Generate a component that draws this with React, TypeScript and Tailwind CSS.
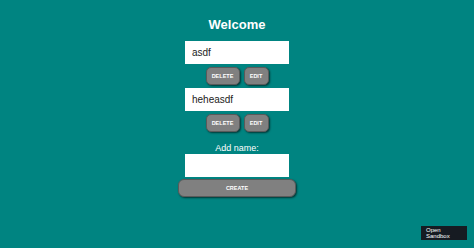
const names = ['asdf', 'heheasdf'];

function SmallButton({ label, width }: { label: string; width: string }) {
  return (
    <button
      className={`${width} flex h-[18px] items-center justify-center rounded-[5px] border border-[#5a5a5a] bg-[#808080] text-[5.5px] font-bold text-white shadow-[1px_1px_2px_rgba(0,0,0,0.6)]`}
    >
      {label}
    </button>
  );
}

export default function App() {
  return (
    <div className="relative h-[248px] w-[474px] overflow-hidden bg-[#008481] font-['Liberation_Sans',Arial,sans-serif]">
      <div className="flex flex-col items-center pt-[16px]">
        <h1 className="text-[13px] leading-[18px] font-bold text-white">Welcome</h1>

        <div className="mt-[7px] flex flex-col items-center gap-[3px]">
          {names.map((n) => (
            <div key={n} className="flex flex-col items-center gap-[3px]">
              <div className="flex h-[23px] w-[104px] items-center bg-white px-[7px] text-[10px] text-[#222]">
                {n}
              </div>
              <div className="flex gap-[4px]">
                <SmallButton label="DELETE" width="w-[34px]" />
                <SmallButton label="EDIT" width="w-[25px]" />
              </div>
            </div>
          ))}
        </div>

        <div className="mt-[10px] text-[9px] leading-[12px] text-white">Add name:</div>
        <div className="h-[23px] w-[104px] bg-white" />
        <button className="mt-[2px] flex h-[18px] w-[118px] items-center justify-center rounded-[6px] border border-[#5a5a5a] bg-[#808080] text-[5.5px] font-bold text-white shadow-[1px_1px_2px_rgba(0,0,0,0.6)]">
          CREATE
        </button>
      </div>

      <div className="absolute top-[226px] left-[421px] flex h-[14px] w-[46px] flex-col justify-center bg-[#161b22] px-[5px] text-[6px] leading-[6px] text-white">
        <span>Open</span>
        <span>Sandbox</span>
      </div>
    </div>
  );
}
